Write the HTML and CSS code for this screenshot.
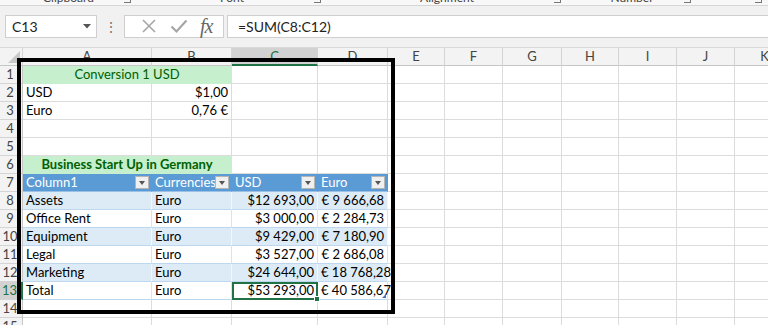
FILE: index.html
```html
<!DOCTYPE html>
<html>
<head>
<meta charset="utf-8">
<link rel="stylesheet" href="styles.css">
</head>
<body>
<div class="app">
  <div class="ribbon">
    <div class="grp g1"><span class="lbl">Clipboard</span><span class="launch"></span></div>
    <div class="grp g2"><span class="lbl">Font</span><span class="launch"></span></div>
    <div class="grp g3"><span class="lbl">Alignment</span><span class="launch"></span></div>
    <div class="grp g4"><span class="lbl">Number</span><span class="launch"></span></div>
    <div class="grp g5"><span class="launch"></span></div>
  </div>
  <div class="fbar">
    <div class="namebox"><span>C13</span><svg class="dd" width="8" height="5" viewBox="0 0 8 5"><path d="M0 0H8L4 4.5Z" fill="#555"/></svg></div>
    <div class="vdots">&#8942;</div>
    <div class="fbtns">
      <svg class="ico" width="16" height="16" viewBox="0 0 16 16"><path d="M2 2L14 14M14 2L2 14" stroke="#a6a6a6" stroke-width="1.6" fill="none"/></svg>
      <svg class="ico" width="18" height="16" viewBox="0 0 18 16"><path d="M1.5 8.5L6.5 13.5L16.5 2.5" stroke="#a6a6a6" stroke-width="2.2" fill="none"/></svg>
      <span class="fx">fx</span>
    </div>
    <div class="finput">=SUM(C8:C12)</div>
  </div>
  <div class="sheet">
    <div class="grid">
      <div class="corner"><svg width="12" height="12" viewBox="0 0 12 12"><path d="M12 0V12H0Z" fill="#c8c8c8"/></svg></div>
      <div class="ch">A</div><div class="ch">B</div><div class="ch sel">C</div><div class="ch">D</div><div class="ch">E</div><div class="ch">F</div><div class="ch">G</div><div class="ch">H</div><div class="ch">I</div><div class="ch">J</div><div class="ch">K</div>

      <div class="rh">1</div><div class="c good span2 center">Conversion 1 USD</div><div class="c"></div><div class="c"></div><div class="c"></div><div class="c"></div><div class="c"></div><div class="c"></div><div class="c"></div><div class="c"></div><div class="c"></div>
      <div class="rh">2</div><div class="c">USD</div><div class="c r">$1,00</div><div class="c"></div><div class="c"></div><div class="c"></div><div class="c"></div><div class="c"></div><div class="c"></div><div class="c"></div><div class="c"></div><div class="c"></div>
      <div class="rh">3</div><div class="c">Euro</div><div class="c r">0,76 €</div><div class="c"></div><div class="c"></div><div class="c"></div><div class="c"></div><div class="c"></div><div class="c"></div><div class="c"></div><div class="c"></div><div class="c"></div>
      <div class="rh">4</div><div class="c"></div><div class="c"></div><div class="c"></div><div class="c"></div><div class="c"></div><div class="c"></div><div class="c"></div><div class="c"></div><div class="c"></div><div class="c"></div><div class="c"></div>
      <div class="rh">5</div><div class="c"></div><div class="c"></div><div class="c"></div><div class="c"></div><div class="c"></div><div class="c"></div><div class="c"></div><div class="c"></div><div class="c"></div><div class="c"></div><div class="c"></div>
      <div class="rh">6</div><div class="c good span2 center bold">Business Start Up in Germany</div><div class="c"></div><div class="c"></div><div class="c"></div><div class="c"></div><div class="c"></div><div class="c"></div><div class="c"></div><div class="c"></div><div class="c"></div>
      <div class="rh">7</div><div class="c th">Column1<span class="filt"></span></div><div class="c th">Currencies<span class="filt"></span></div><div class="c th">USD<span class="filt"></span></div><div class="c th">Euro<span class="filt"></span></div><div class="c"></div><div class="c"></div><div class="c"></div><div class="c"></div><div class="c"></div><div class="c"></div><div class="c"></div>
      <div class="rh">8</div><div class="c tb band">Assets</div><div class="c tb band">Euro</div><div class="c tb band r">$12 693,00</div><div class="c tb band r">€ 9 666,68</div><div class="c"></div><div class="c"></div><div class="c"></div><div class="c"></div><div class="c"></div><div class="c"></div><div class="c"></div>
      <div class="rh">9</div><div class="c tb">Office Rent</div><div class="c tb">Euro</div><div class="c tb r">$3 000,00</div><div class="c tb r">€ 2 284,73</div><div class="c"></div><div class="c"></div><div class="c"></div><div class="c"></div><div class="c"></div><div class="c"></div><div class="c"></div>
      <div class="rh">10</div><div class="c tb band">Equipment</div><div class="c tb band">Euro</div><div class="c tb band r">$9 429,00</div><div class="c tb band r">€ 7 180,90</div><div class="c"></div><div class="c"></div><div class="c"></div><div class="c"></div><div class="c"></div><div class="c"></div><div class="c"></div>
      <div class="rh">11</div><div class="c tb">Legal</div><div class="c tb">Euro</div><div class="c tb r">$3 527,00</div><div class="c tb r">€ 2 686,08</div><div class="c"></div><div class="c"></div><div class="c"></div><div class="c"></div><div class="c"></div><div class="c"></div><div class="c"></div>
      <div class="rh">12</div><div class="c tb band">Marketing</div><div class="c tb band">Euro</div><div class="c tb band r">$24 644,00</div><div class="c tb band r">€ 18 768,28</div><div class="c"></div><div class="c"></div><div class="c"></div><div class="c"></div><div class="c"></div><div class="c"></div><div class="c"></div>
      <div class="rh sel">13</div><div class="c tb">Total</div><div class="c tb">Euro</div><div class="c tb r active">$53 293,00<span class="handle"></span></div><div class="c tb r last">€ 40 586,67<span class="resize"></span></div><div class="c"></div><div class="c"></div><div class="c"></div><div class="c"></div><div class="c"></div><div class="c"></div><div class="c"></div>
      <div class="rh">14</div><div class="c"></div><div class="c"></div><div class="c"></div><div class="c"></div><div class="c"></div><div class="c"></div><div class="c"></div><div class="c"></div><div class="c"></div><div class="c"></div><div class="c"></div>
      <div class="rh">15</div><div class="c"></div><div class="c"></div><div class="c"></div><div class="c"></div><div class="c"></div><div class="c"></div><div class="c"></div><div class="c"></div><div class="c"></div><div class="c"></div><div class="c"></div>
    </div>
    <div class="frame"></div>
  </div>
</div>
</body>
</html>
```
FILE: styles.css
```css
* { box-sizing: border-box; }
html, body { margin: 0; padding: 0; }
body {
  width: 768px;
  height: 325px;
  overflow: hidden;
  background: #ffffff;
  font-family: "Lato", "Open Sans", sans-serif;
  color: #000;
}
.app { width: 768px; }

.ribbon {
  height: 6px;
  overflow: hidden;
  display: flex;
  background: #f8f8f8;
  border-bottom: 1px solid #d6d6d6;
}
.grp {
  position: relative;
  display: flex;
  justify-content: center;
  font-size: 12px;
  color: #444;
  line-height: 14px;
}
.grp .lbl { margin-top: -9px; }
.launch {
  position: absolute;
  right: 6px;
  top: -4px;
  width: 7px;
  height: 7px;
  border-right: 1px solid #777;
  border-bottom: 1px solid #777;
}
.g1 { width: 137px; }
.g2 { width: 190px; }
.g3 { width: 240px; }
.g4 { width: 130px; }
.g5 { width: 71px; }

.fbar {
  height: 42px;
  background: #f1f1f1;
  display: flex;
  align-items: center;
  padding: 0 0 1px 5px;
  border-bottom: 1px solid #d9d9d9;
}
.namebox {
  width: 92px;
  height: 23px;
  background: #fff;
  border: 1px solid #cfcfcf;
  display: flex;
  align-items: center;
  justify-content: space-between;
  padding: 0 5px 0 6px;
  font-size: 14px;
  color: #222;
}
.vdots {
  width: 27px;
  text-align: center;
  color: #777;
  font-size: 14px;
}
.fbtns {
  width: 100px;
  height: 23px;
  background: #fff;
  border: 1px solid #cfcfcf;
  display: flex;
  align-items: center;
  padding: 0 0 0 16px;
  gap: 13px;
}
.fx {
  font-family: "Liberation Serif", serif;
  font-style: italic;
  font-size: 20px;
  color: #666;
  margin-left: -1px;
  letter-spacing: -1px;
}
.finput {
  flex: 1;
  height: 23px;
  margin-left: 3px;
  background: #fff;
  border: 1px solid #cfcfcf;
  border-right: none;
  display: flex;
  align-items: center;
  padding-left: 10px;
  font-size: 14px;
  color: #222;
}

.sheet { position: relative; }
.grid {
  display: grid;
  grid-template-columns: 23px 129px 80px 86px 70px 57px 58px 59px 57px 58px 58px 60px;
  grid-auto-rows: 18px;
  font-size: 13px;
}
.corner {
  background: #f3f3f3;
  border-right: 1px solid #d4d4d4;
  border-bottom: 1px solid #c6c6c6;
  display: flex;
  align-items: flex-end;
  justify-content: flex-end;
  padding: 0 2px 2px 0;
}
.ch {
  background: #f3f3f3;
  border-right: 1px solid #d4d4d4;
  border-bottom: 1px solid #c6c6c6;
  text-align: center;
  line-height: 17px;
  font-size: 13px;
  color: #444;
}
.ch.sel {
  background: #d2d2d2;
  color: #217346;
  border-bottom: 2px solid #217346;
}
.rh {
  background: #f3f3f3;
  border-right: 1px solid #c6c6c6;
  border-bottom: 1px solid #d4d4d4;
  text-align: center;
  line-height: 17px;
  font-size: 13px;
  color: #444;
  white-space: nowrap;
  overflow: hidden;
  padding-right: 2px;
}
.rh.sel {
  background: #d2d2d2;
  color: #217346;
  border-right: 2px solid #217346;
}
.c {
  position: relative;
  border-right: 1px solid #dcdcdc;
  border-bottom: 1px solid #dcdcdc;
  padding: 0 3px 0 3px;
  line-height: 17px;
  white-space: nowrap;
}
.span2 { grid-column: span 2; }
.center { text-align: center; }
.r { text-align: right; padding-right: 3px; }
.bold { font-weight: bold; }
.good {
  background: #c6efce;
  color: #006100;
  border-color: #c6efce;
}
.th {
  background: #5b9bd5;
  color: #fff;
  border-right-color: #5b9bd5;
  border-bottom-color: #9bc2e6;
  padding-right: 18px;
}
.filt {
  position: absolute;
  right: 2px;
  top: 2px;
  width: 14px;
  height: 13px;
  background: #f0f0f0;
  border: 1px solid #b5b5b5;
}
.filt::after {
  content: "";
  position: absolute;
  left: 3px;
  top: 4px;
  border-left: 3.5px solid transparent;
  border-right: 3.5px solid transparent;
  border-top: 4px solid #555;
}
.tb {
  border-bottom-color: #bdd7ee;
  border-right-color: #e2e2e2;
}
.band {
  background: #ddebf7;
  border-right-color: #f2f7fc;
}
.active {
  outline: 2px solid #217346;
  outline-offset: -2px;
}
.handle {
  position: absolute;
  right: -3px;
  bottom: -3px;
  width: 6px;
  height: 6px;
  background: #217346;
  border: 1px solid #fff;
  z-index: 2;
}
.resize {
  position: absolute;
  right: 1px;
  bottom: 1px;
  width: 0;
  height: 0;
  border-left: 4px solid transparent;
  border-bottom: 4px solid #4472c4;
}
.frame {
  position: absolute;
  left: 17px;
  top: 10px;
  width: 378px;
  height: 256px;
  border: 4px solid #000;
  pointer-events: none;
}
```
